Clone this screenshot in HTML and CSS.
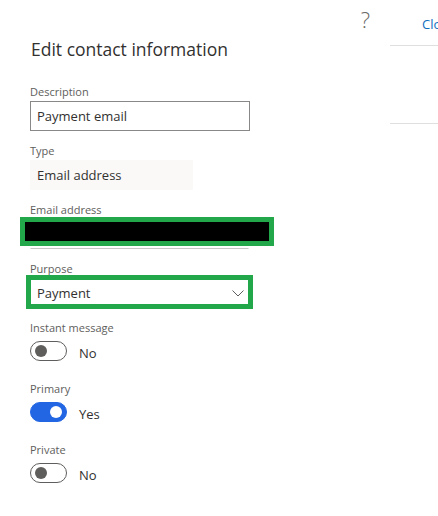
FILE: index.html
```html
<!DOCTYPE html>
<html lang="en">
<head>
    <meta charset="UTF-8">
    <meta name="viewport" content="width=device-width, initial-scale=1.0">
    <title>Edit contact information</title>
    <link rel="stylesheet" href="styles.css">
</head>
<body>
    <div class="page">
        <div class="dialog">
            <div class="dialog-top">
                <span class="help-btn">?</span>
            </div>
            <h1 class="dialog-title">Edit contact information</h1>

            <div class="field">
                <label class="field-label">Description</label>
                <div class="input">Payment email</div>
            </div>

            <div class="field">
                <label class="field-label">Type</label>
                <div class="input readonly">Email address</div>
            </div>

            <!-- redacted value, marked in green -->
            <div class="field">
                <label class="field-label">Email address</label>
                <div class="input underline">
                    <div class="mark redacted"></div>
                </div>
            </div>

            <div class="field">
                <label class="field-label">Purpose</label>
                <div class="input select">
                    <span>Payment</span>
                    <svg class="chevron" width="12" height="7" viewBox="0 0 12 7">
                        <path d="M0.5 0.5 L6 6 L11.5 0.5" fill="none" stroke="#605e5c" stroke-width="1"/>
                    </svg>
                    <div class="mark outline"></div>
                </div>
            </div>

            <div class="field">
                <label class="field-label">Instant message</label>
                <div class="toggle-row">
                    <span class="toggle"><span class="knob"></span></span>
                    <span class="toggle-text">No</span>
                </div>
            </div>

            <div class="field">
                <label class="field-label">Primary</label>
                <div class="toggle-row">
                    <span class="toggle on"><span class="knob"></span></span>
                    <span class="toggle-text">Yes</span>
                </div>
            </div>

            <div class="field">
                <label class="field-label">Private</label>
                <div class="toggle-row">
                    <span class="toggle"><span class="knob"></span></span>
                    <span class="toggle-text">No</span>
                </div>
            </div>
        </div>

        <div class="side-pane">
            <div class="side-top"><span class="close-link">Close</span></div>
            <div class="side-body"></div>
        </div>
    </div>
</body>
</html>
```

FILE: styles.css
```css
* {
    margin: 0;
    padding: 0;
    box-sizing: border-box;
    font-family: 'Segoe UI', 'Open Sans', sans-serif;
}

:root {
    --text: #323130;
    --label: #605e5c;
    --border: #8a8886;
    --mark: #22a84a;
    --blue: #2266e3;
}

body {
    background: #ffffff;
    color: var(--text);
    overflow: hidden;
}

.page {
    display: flex;
    width: 438px;
    height: 516px;
}

.dialog {
    width: 390px;
    flex: none;
    padding-left: 30px;
}

.dialog-top {
    display: flex;
    justify-content: flex-end;
    height: 34px;
    padding-right: 20px;
}

.help-btn {
    font-size: 22px;
    font-weight: 300;
    line-height: 38px;
    color: #6b6966;
}

.dialog-title {
    font-size: 17.5px;
    font-weight: 400;
    line-height: 30px;
    height: 38px;
    padding-left: 1px;
}

.field {
    margin-top: 12px;
}

.field-label {
    display: block;
    font-size: 11px;
    line-height: 16px;
    margin-bottom: 1px;
    color: var(--label);
}

.input {
    position: relative;
    display: flex;
    align-items: center;
    width: 220px;
    height: 30px;
    padding: 0 6px;
    border: 1px solid var(--border);
    font-size: 13px;
}

.input.readonly {
    width: 163px;
    border-color: transparent;
    background: #faf9f8;
}

.input.underline {
    width: 219px;
    border-color: transparent;
    border-bottom-color: #c8c6c4;
}

.input.select {
    justify-content: space-between;
    padding-right: 5px;
}

.mark {
    position: absolute;
    border: 5px solid var(--mark);
}

.mark.redacted {
    left: -11px;
    top: -3px;
    width: 254px;
    height: 29px;
    background: #000000;
}

.mark.outline {
    left: -5px;
    top: -4px;
    width: 227px;
    height: 34px;
}

.toggle-row {
    display: flex;
    align-items: flex-start;
    height: 32px;
    padding-top: 4px;
}

.toggle {
    display: flex;
    align-items: center;
    width: 37px;
    height: 20px;
    padding: 0 4px;
    border: 1px solid #605e5c;
    border-radius: 10px;
}

.knob {
    width: 12px;
    height: 12px;
    border-radius: 50%;
    background: #605e5c;
}

.toggle.on {
    justify-content: flex-end;
    background: var(--blue);
    border-color: var(--blue);
}

.toggle.on .knob {
    background: #ffffff;
}

.toggle-text {
    margin: 2px 0 0 12px;
    font-size: 13px;
    line-height: 20px;
}

.side-pane {
    flex: 1;
    overflow: hidden;
}

.side-top {
    height: 46px;
    padding: 12px 0 0 32px;
    border-bottom: 1px solid #e1dfdd;
    white-space: nowrap;
}

.close-link {
    font-size: 13px;
    color: #106ebe;
}

.side-body {
    height: 78px;
    border-bottom: 1px solid #e1dfdd;
}
```
